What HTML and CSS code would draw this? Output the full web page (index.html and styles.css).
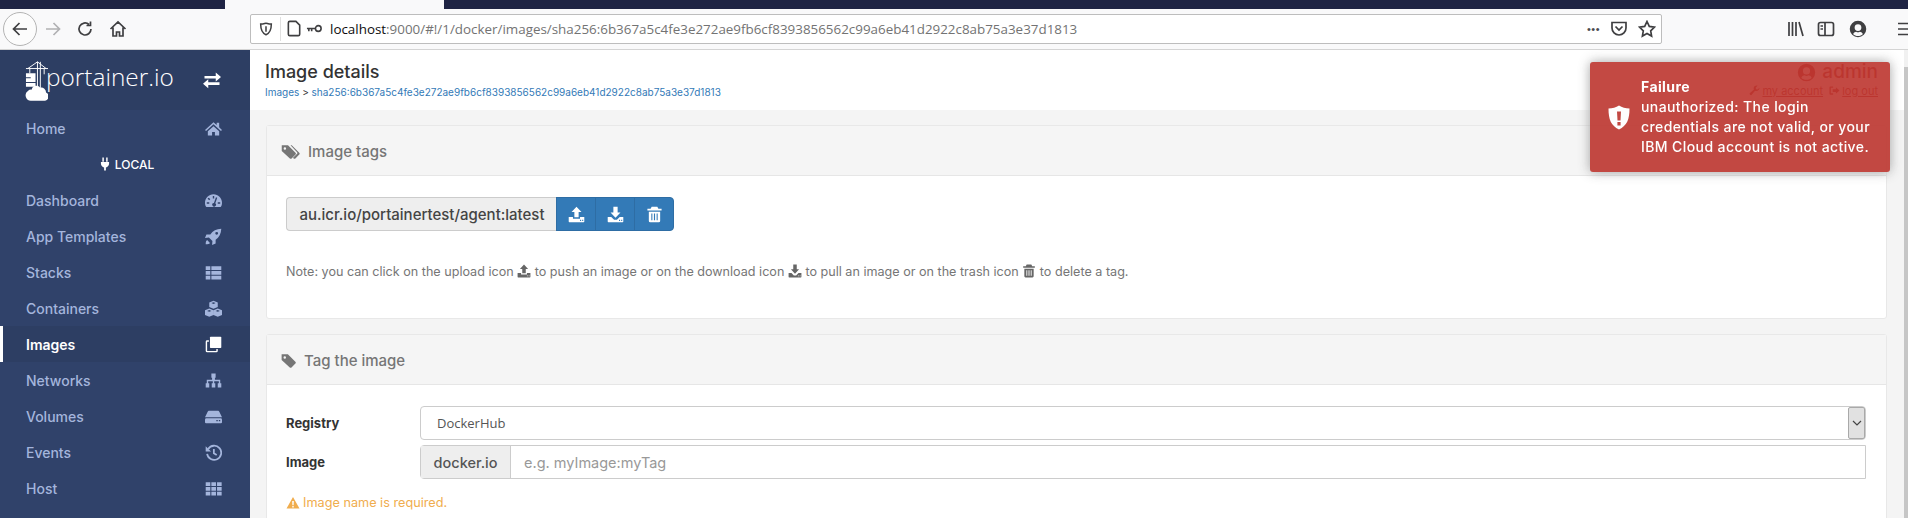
FILE: index.html
```html
<!DOCTYPE html>
<html lang="en">
<head>
<meta charset="utf-8">
<title>Portainer</title>
<link rel="stylesheet" href="styles.css">
</head>
<body>
<svg class="sprite" aria-hidden="true">
  <symbol id="i-home" viewBox="0 0 24 24"><path d="M12 3 0 14l1.5 1.6L12 6l10.500 9.600L24 14l-4-3.700V4h-3.500v3.100zM4 16l8-7.300L20 16v6h-6v-5h-4v5H4z"/></symbol>
  <symbol id="i-plug" viewBox="0 0 24 24"><path d="M7.500 1H10v7H7.500zM14 1h2.500v7H14zM5 8.500h14V11c0 3.500-2.500 6-5.500 6.800V23h-3v-5.200C7.500 17 5 14.500 5 11z"/></symbol>
  <symbol id="i-dash" viewBox="0 0 24 24"><path fill-rule="evenodd" d="M12 3C5.400 3 0 8.400 0 15c0 2.400.7 4.500 1.900 6.300h20.200C23.300 19.500 24 17.400 24 15 24 8.400 18.600 3 12 3zM11 5.500h2v3.500h-2zM5 8l2.500 2-1.400 1.500-2.500-2zM2.500 14.500h3.500v2H2.500zM18 14.500h3.500v2H18zM15.500 7.500l1.800.6-2.800 7.900a2.600 2.600 0 1 1-1.900-.6z"/></symbol>
  <symbol id="i-rocket" viewBox="0 0 24 24"><path fill-rule="evenodd" d="M23 1c-7 .3-12 3-15.500 8H2L0 14l5.500-.5 5 5L10 24l5-2v-5.500C20 13 22.700 8 23 1zM16.500 5.500a2 2 0 1 1 0 4 2 2 0 0 1 0-4zM3 17c-1.500 1-2 3-2 6 3 0 5-.5 6-2z"/></symbol>
  <symbol id="i-thlist" viewBox="0 0 24 24"><path d="M1 3h6.500v5.500H1zM9 3h14v5.500H9zM1 10h6.500v5H1zM9 10h14v5H9zM1 16.500h6.500V22H1zM9 16.500h14V22H9z"/></symbol>
  <symbol id="i-cubes" viewBox="0 0 24 24"><path fill-rule="evenodd" d="M12 1l6 2.500V10l-6 2.500L6 10V3.500zM12 3.200 9 4.400l3 1.200 3-1.200zM6 12l6 2.500V21l-6 2.500L0 21v-6.500zM6 14.200l-3 1.200 3 1.200 3-1.200zM18 12l6 2.500V21l-6 2.500-6-2.500-.1-6.500zM18 14.200l-3 1.200 3 1.200 3-1.200z"/></symbol>
  <symbol id="i-clone" viewBox="0 0 24 24"><path d="M8 1h14a1 1 0 0 1 1 1v14a1 1 0 0 1-1 1H8a1 1 0 0 1-1-1V2a1 1 0 0 1 1-1z"/><path d="M1 8a2 2 0 0 1 2-2h2.500v2H3v13h13v-2.500h2V21a2 2 0 0 1-2 2H3a2 2 0 0 1-2-2z"/></symbol>
  <symbol id="i-sitemap" viewBox="0 0 24 24"><path d="M9 2h6v6h-1v3h7.500v5H23v6h-5v-6h1.500v-3H13v3h1.500v6h-5v-6H11v-3H4.500v3H6v6H1v-6h1.500v-5H10V8H9z"/></symbol>
  <symbol id="i-hdd" viewBox="0 0 24 24"><path fill-rule="evenodd" d="M6 4h12c1 0 2 .6 2.400 1.500L24 13H0l3.600-7.500C4 4.600 5 4 6 4zM2 14.500h20a2 2 0 0 1 2 2V20a1.500 1.500 0 0 1-1.500 1.500h-21A1.500 1.500 0 0 1 0 20v-3.500a2 2 0 0 1 2-2zM16 17v1.800h2V17zM19.500 17v1.800h2V17z"/></symbol>
  <symbol id="i-history" viewBox="0 0 24 24"><path fill="none" stroke="currentColor" stroke-width="2.500" d="M4.500 7A10 10 0 1 1 3 14M12.500 7v6l4 2.500"/><path d="M1 3v7.500h7.500z"/></symbol>
  <symbol id="i-th" viewBox="0 0 24 24"><path d="M1 3h6.500v5.500H1zM9 3h6.500v5.500H9zM17 3h6.500v5.500H17zM1 10h6.500v5H1zM9 10h6.500v5H9zM17 10h6.500v5H17zM1 16.500h6.500V22H1zM9 16.500h6.500V22H9zM17 16.500h6.500V22H17z"/></symbol>
  <symbol id="i-tag" viewBox="0 0 24 24"><path fill-rule="evenodd" d="M1 2h10l12 12a2 2 0 0 1 0 2.800L16.800 23a2 2 0 0 1-2.800 0L1 11zM6 5a2 2 0 1 0 0 4 2 2 0 0 0 0-4z"/></symbol>
  <symbol id="i-tags" viewBox="0 0 30 24"><path fill-rule="evenodd" d="M1 2h10l12 12a2 2 0 0 1 0 2.800L16.800 23a2 2 0 0 1-2.800 0L1 11zM6 5a2 2 0 1 0 0 4 2 2 0 0 0 0-4z"/><path d="M15 2h2l12 12a2 2 0 0 1 0 2.800L22.800 23a2 2 0 0 1-2.800 0l-1-1 6.500-6.500a2 2 0 0 0 0-2.500z"/></symbol>
  <symbol id="i-upload" viewBox="0 0 24 24"><path fill-rule="evenodd" d="M12 1l7 7.500h-4V16H9V8.500H5zM1 15.500h6V18h10v-2.500h6V22a1 1 0 0 1-1 1H2a1 1 0 0 1-1-1zM17 19.500v1.500h1.500v-1.500zM20 19.500v1.500h1.500v-1.500z"/></symbol>
  <symbol id="i-download" viewBox="0 0 24 24"><path fill-rule="evenodd" d="M9 1h6v8h4l-7 7.500L5 9h4zM1 15.500h5l4 4h4l4-4h5V22a1 1 0 0 1-1 1H2a1 1 0 0 1-1-1zM17 19.500v1.500h1.500v-1.500zM20 19.500v1.500h1.500v-1.500z"/></symbol>
  <symbol id="i-trash" viewBox="0 0 24 24"><path fill-rule="evenodd" d="M8 1h8l1.500 3H22v2.500H2V4h4.500zM4 8h16v13a2 2 0 0 1-2 2H6a2 2 0 0 1-2-2zM7.500 10.500V20h1.500v-9.500zM11.200 10.500V20h1.600v-9.500zM15 10.500V20h1.500v-9.500z"/></symbol>
  <symbol id="i-warn" viewBox="0 0 24 24"><path fill-rule="evenodd" d="M12 2 24 23H0zM10.500 9l.4 8h2.200l.4-8zM10.700 18.500v2.500h2.600v-2.500z"/></symbol>
  <symbol id="i-shield" viewBox="0 0 24 24"><path fill-rule="evenodd" d="M12 0c3 2 6.500 3 10.500 3 0 11-2.500 17-10.500 21C4 20 1.500 14 1.500 3 5.500 3 9 2 12 0zM10 6l.5 9h3l.5-9zM10.400 16.500V20h3.200v-3.500z"/></symbol>
  <symbol id="i-user" viewBox="0 0 24 24"><path fill-rule="evenodd" d="M12 1a11 11 0 1 1 0 22 11 11 0 0 1 0-22zM12 5.500a4.500 4.500 0 1 0 0 9 4.500 4.500 0 0 0 0-9zM5.500 18.500c1.500 1.800 4 2.700 6.500 2.700s5-.9 6.500-2.700c-1-2-3-3-4-3-1 .6-1.700.9-2.500.9s-1.500-.3-2.500-.9c-1 0-3 1-4 3z"/></symbol>
  <symbol id="i-wrench" viewBox="0 0 24 24"><path d="M23 6c0 4-3 7-7 7-1 0-2-.2-2.800-.6L5.500 22a3 3 0 0 1-4-3.800L10.800 10c-.4-1-.6-2-.6-3 0-3.800 3-6 6.800-6 .8 0 1.500.1 2 .3L14.500 6l1 3 3 1L23 6z"/></symbol>
  <symbol id="i-signout" viewBox="0 0 24 24"><path d="M9 3v3H4v12h5v3H3a2 2 0 0 1-2-2V5a2 2 0 0 1 2-2zM15 5l8 7-8 7v-4H8V9h7z"/></symbol>
  <symbol id="i-exchange" viewBox="0 0 24 24"><path d="M17 2l7 6-7 6v-4H2V6.500h15zM7 11v4h15v3.500H7V23l-7-6z"/></symbol>
</svg>
<div class="app">
  <div class="tabs">
    <span class="tab-dark"></span>
    <span class="tab-active"></span>
    <span class="tab-dark grow"></span>
  </div>
  <header class="toolbar">
    <div class="nav-left">
      <span class="nav-back"><svg class="ff" viewBox="0 0 18 18"><path d="M16 9H3M8.500 3 2.500 9l6 6"/></svg></span>
      <svg class="ff nav-fwd" viewBox="0 0 18 18"><path d="M2 9h13M9.500 3l6 6-6 6"/></svg>
      <svg class="ff nav-reload" viewBox="0 0 18 18"><path d="M15 9a6 6 0 1 1-2-4.500M14.500 1.500v4h-4"/></svg>
      <svg class="ff nav-home" viewBox="0 0 18 18"><path d="M1.500 9 9 2l7.500 7M4 7.500V16h3.500v-4h3v4H14V7.500"/></svg>
    </div>
    <div class="urlbar">
      <svg class="ff u-shield" viewBox="0 0 18 18"><path d="M3 3.500c4 0 4.500-1 6-1s2 1 6 1c0 6-1 10-6 12-5-2-6-6-6-12zM9 6v6"/></svg>
      <span class="u-sep"></span>
      <svg class="ff u-page" viewBox="0 0 18 18"><path d="M4 1.500h6.500l4 4V15a1.500 1.500 0 0 1-1.500 1.500H4A1.500 1.500 0 0 1 2.500 15V3A1.500 1.500 0 0 1 4 1.500z"/></svg>
      <svg class="ff u-key" viewBox="0 0 18 18"><circle cx="13" cy="9" r="3"/><path d="M10 9H1M3 9v3M6 9v3"/></svg>
      <span class="u-text">localhost<span class="u-dim">:9000/#!/1/docker/images/sha256:6b367a5c4fe3e272ae9fb6cf8393856562c99a6eb41d2922c8ab75a3e37d1813</span></span>
      <span class="u-dots">•••</span>
      <svg class="ff u-pocket" viewBox="0 0 18 18"><path d="M2 2.500h14V8a7 7 0 0 1-14 0zM5.500 6.500 9 10l3.500-3.500"/></svg>
      <svg class="ff u-star" viewBox="0 0 18 18"><path d="M9 1.500l2.300 4.900 5.200.7-3.800 3.700.9 5.300L9 13.500l-4.600 2.600.9-5.300L1.500 7.100l5.200-.7z"/></svg>
    </div>
    <div class="nav-right">
      <svg class="ff" viewBox="0 0 18 18"><path d="M2 2v14M5.500 2v14M9 2v14M12 2l4 14"/></svg>
      <svg class="ff" viewBox="0 0 18 18"><rect x="1.500" y="2.500" width="15" height="13" rx="2"/><path d="M8 2.500v13M3.500 6h2.500M3.500 9h2.500"/></svg>
      <svg class="nr-user"><use href="#i-user"/></svg>
      <span class="nr-sep"></span>
      <svg class="ff nr-menu" viewBox="0 0 18 18"><path d="M2 3.500h14M2 9h14M2 14.500h14"/></svg>
    </div>
  </header>
  <div class="shell">
    <aside class="sidebar">
      <div class="brand">
        <div class="logo">
          <svg class="crane" viewBox="0 0 24 42">
            <path class="crane-line" d="M1 8h23M13 1 3 8M13 1l9 7M13 1v30M16 1v30M5 8v5M20 8v6"/>
            <path class="crane-fill" d="M1 13h10v4H1zM1 18h10v4H1zM1 23h10v4H1zM6 13h5v9H6z"/>
            <path class="crane-fill" d="M7 30a5 5 0 0 1 9-2 5 5 0 0 1 6 5 4.500 4.500 0 0 1-1 8.500H6a5.500 5.500 0 0 1-3-10 5 5 0 0 1 4-1.500z"/>
          </svg>
          <span class="logo-text">portainer.io</span>
        </div>
        <svg class="ico"><use href="#i-exchange"/></svg>
      </div>
      <nav class="menu">
        <a class="item"><span>Home</span><svg class="ico"><use href="#i-home"/></svg></a>
        <div class="endpoint"><svg class="plug"><use href="#i-plug"/></svg>LOCAL</div>
        <a class="item"><span>Dashboard</span><svg class="ico"><use href="#i-dash"/></svg></a>
        <a class="item"><span>App Templates</span><svg class="ico"><use href="#i-rocket"/></svg></a>
        <a class="item"><span>Stacks</span><svg class="ico"><use href="#i-thlist"/></svg></a>
        <a class="item"><span>Containers</span><svg class="ico"><use href="#i-cubes"/></svg></a>
        <a class="item active"><span>Images</span><svg class="ico"><use href="#i-clone"/></svg></a>
        <a class="item"><span>Networks</span><svg class="ico"><use href="#i-sitemap"/></svg></a>
        <a class="item"><span>Volumes</span><svg class="ico"><use href="#i-hdd"/></svg></a>
        <a class="item"><span>Events</span><svg class="ico"><use href="#i-history"/></svg></a>
        <a class="item"><span>Host</span><svg class="ico"><use href="#i-th"/></svg></a>
      </nav>
    </aside>
    <main class="main">
      <div class="page-head">
        <div>
          <h1 class="title">Image details</h1>
          <div class="crumbs"><a>Images</a> &gt; <a>sha256:6b367a5c4fe3e272ae9fb6cf8393856562c99a6eb41d2922c8ab75a3e37d1813</a></div>
        </div>
        <div class="account">
          <div class="acc-name"><svg class="acc-user"><use href="#i-user"/></svg>admin</div>
          <div class="acc-links"><svg class="acc-ico"><use href="#i-wrench"/></svg><u>my account</u> <svg class="acc-ico acc-gap"><use href="#i-signout"/></svg><u>log out</u></div>
        </div>
      </div>
      <div class="content">
        <section class="widget">
          <div class="w-head"><svg class="w-ico-wide"><use href="#i-tags"/></svg>Image tags</div>
          <div class="w-body tags-body">
            <div class="tag-group">
              <span class="tag-name">au.icr.io/portainertest/agent:latest</span>
              <span class="tag-btn"><svg class="btn-ico"><use href="#i-upload"/></svg></span>
              <span class="tag-btn"><svg class="btn-ico"><use href="#i-download"/></svg></span>
              <span class="tag-btn"><svg class="btn-ico"><use href="#i-trash"/></svg></span>
            </div>
            <p class="note">Note: you can click on the upload icon <svg class="note-ico"><use href="#i-upload"/></svg> to push an image or on the download icon <svg class="note-ico"><use href="#i-download"/></svg> to pull an image or on the trash icon <svg class="note-ico"><use href="#i-trash"/></svg> to delete a tag.</p>
          </div>
        </section>
        <section class="widget">
          <div class="w-head"><svg class="w-ico"><use href="#i-tag"/></svg>Tag the image</div>
          <div class="w-body form-body">
            <div class="f-row">
              <label class="f-label">Registry</label>
              <div class="select"><span>DockerHub</span><span class="sel-btn"><svg class="sel-chev" viewBox="0 0 10 6"><path d="M1 1l4 4 4-4"/></svg></span></div>
            </div>
            <div class="f-row">
              <label class="f-label">Image</label>
              <div class="input-group"><span class="addon">docker.io</span><span class="placeholder">e.g. myImage:myTag</span></div>
            </div>
            <div class="warning"><svg class="warn-ico"><use href="#i-warn"/></svg>Image name is required.</div>
          </div>
        </section>
      </div>
    </main>
    <div class="scrollbar"><span class="thumb"></span></div>
  </div>
</div>
<div class="toast">
  <svg class="toast-ico"><use href="#i-shield"/></svg>
  <div class="toast-text"><strong>Failure</strong><br>unauthorized: The login credentials are not valid, or your IBM Cloud account is not active.</div>
</div>
</body>
</html>
```
FILE: styles.css
```css
* { box-sizing: border-box; }
html, body { margin: 0; height: 100%; overflow: hidden; }
body { font-family: Inter, "Liberation Sans", sans-serif; font-size: 13px; color: #767676; background: #fff; }
.sprite { display: none; }
svg { fill: currentColor; flex: none; }
.app { height: 100vh; display: flex; flex-direction: column; }

.tabs { height: 9px; display: flex; flex: none; }
.tab-dark { width: 225px; background: #1f2444; }
.tab-dark.grow { flex: 1; width: auto; }
.tab-active { width: 219px; background: #f9f9fa; }

.toolbar { height: 41px; flex: none; display: flex; align-items: center; background: #f9f9fa; border-bottom: 1px solid #d4d4d4; padding-bottom: 1px; }
.ff { width: 18px; height: 18px; fill: none; stroke: #3f3f41; stroke-width: 1.7; }
.nav-left { width: 250px; display: flex; align-items: center; flex: none; padding-left: 3px; }
.nav-back { width: 34px; height: 34px; border: 1px solid #b4b4b4; border-radius: 50%; display: flex; align-items: center; justify-content: center; background: #fcfcfc; }
.nav-fwd { margin-left: 7px; stroke: #b1b1b3; }
.nav-reload { margin-left: 14px; }
.nav-home { margin-left: 15px; }
.urlbar { width: 1412px; height: 30px; flex: none; display: flex; align-items: center; background: #fff; border: 1px solid #bdbdbd; border-radius: 2px; }
.u-shield { margin-left: 7px; width: 16px; height: 16px; }
.u-sep { width: 1px; height: 24px; background: #e0e0e0; margin-left: 6px; }
.u-page { margin-left: 5px; width: 17px; height: 17px; }
.u-key { margin-left: 3px; width: 17px; height: 17px; }
.u-text { margin-left: 7px; font-family: "Open Sans", "Liberation Sans", sans-serif; font-size: 13.4px; color: #0c0c0d; white-space: nowrap; }
.u-dim { color: #737373; }
.u-dots { margin-left: auto; font-size: 11px; letter-spacing: 0.5px; color: #4a4a4f; font-family: "Liberation Sans", sans-serif; }
.u-pocket { margin-left: 10px; }
.u-star { margin: 0 5px 0 10px; }
.nav-right { flex: 1; display: flex; align-items: center; padding-left: 125px; gap: 12px; overflow: hidden; }
.nr-user { width: 18px; height: 18px; color: #3f3f41; margin-left: 2px; }
.nr-sep { width: 1px; height: 30px; background: #d8d8d8; }
.nr-menu { margin-left: 5px; }

.shell { flex: 1; display: flex; min-height: 0; }
.sidebar { width: 250px; flex: none; background: #30426a; color: #a4b5dc; }
.brand { height: 60px; background: #2d3e63; display: flex; align-items: center; justify-content: space-between; padding: 0 29px 0 25px; color: #fff; }
.logo { display: flex; align-items: center; }
.crane { width: 23px; height: 42px; margin-top: 2px; }
.crane-line { fill: none; stroke: #fff; stroke-width: 1; }
.crane-fill { fill: #fff; }
.logo-text { margin: -6px 0 0 -2px; font-family: "Open Sans", sans-serif; font-weight: 300; font-size: 24.4px; line-height: 1; color: #fff; }
.ico { width: 17px; height: 17px; }
.brand .ico { width: 18px; height: 18px; }
.item { height: 36px; display: flex; align-items: center; justify-content: space-between; padding: 0 28px 0 26px; font-size: 14px; font-weight: 500; }
.item.active { background: #2d3e63; color: #fff; box-shadow: inset 3px 0 0 #fff; font-weight: 600; }
.endpoint { height: 36px; display: flex; align-items: center; justify-content: center; gap: 3px; color: #fff; font-size: 12px; font-weight: 500; padding-left: 2px; }
.plug { width: 14px; height: 16px; }

.main { flex: 1; min-width: 0; display: flex; flex-direction: column; background: #f4f4f4; }
.page-head { height: 60px; flex: none; background: #fff; display: flex; justify-content: space-between; padding: 11px 26px 0 15px; }
.title { margin: 0; font-size: 18px; font-weight: 500; line-height: 22px; color: #333; }
.crumbs { font-size: 10px; line-height: 14px; margin-top: 2px; color: #333; }
.crumbs a { color: #337ab7; }
.account { text-align: right; color: #b03a33; }
.acc-name { font-size: 19px; font-weight: 500; line-height: 22px; display: flex; align-items: center; justify-content: flex-end; gap: 6px; }
.acc-user { width: 19px; height: 19px; }
.acc-links { font-size: 11px; line-height: 14px; margin-top: 1px; }
.acc-ico { width: 11px; height: 11px; vertical-align: -1px; margin-right: 2px; }
.acc-gap { margin-left: 3px; }

.content { flex: 1; padding: 15px 17px 0 16px; display: flex; flex-direction: column; gap: 15px; overflow: hidden; }
.widget { background: #fff; border: 1px solid #e8e8e8; border-radius: 3px; flex: none; }
.w-head { height: 50px; background: #f5f5f5; border-bottom: 1px solid #e6e6e6; display: flex; align-items: center; padding: 1px 0 0 14px; font-size: 15px; font-weight: 500; color: #767676; }
.w-ico-wide { width: 19px; height: 15px; margin-right: 8px; }
.w-ico { width: 15px; height: 15px; margin-right: 8px; }
.w-body { padding: 21px 19px 0; }
.tags-body { height: 142px; }
.tag-group { display: inline-flex; height: 34px; font-size: 15px; font-weight: 500; color: #444; }
.tag-name { width: 271px; display: flex; align-items: center; justify-content: center; background: #eee; border: 1px solid #ccc; border-right: 0; border-radius: 4px 0 0 4px; white-space: nowrap; }
.tag-btn { width: 40px; display: flex; align-items: center; justify-content: center; background: #337ab7; border: 1px solid #2e6da4; color: #fff; margin-left: -1px; }
.tag-btn:last-child { border-radius: 0 4px 4px 0; }
.btn-ico { width: 17px; height: 17px; }
.note { margin: 31px 0 0; font-size: 12.6px; line-height: 20px; white-space: nowrap; }
.note-ico { width: 14px; height: 14px; vertical-align: -2px; color: #666; }
.form-body { height: 200px; padding-right: 20px; }
.f-row { display: flex; align-items: center; height: 34px; margin-bottom: 5px; }
.f-label { width: 134px; font-size: 13px; font-weight: 700; color: #333; }
.select { flex: 1; height: 34px; display: flex; align-items: center; justify-content: space-between; border: 1px solid #ccc; border-radius: 4px; padding-left: 16px; font-family: "Open Sans", sans-serif; font-size: 13px; color: #555; background: #fff; }
.sel-btn { width: 17px; height: 32px; display: flex; align-items: center; justify-content: center; background: #e1e1e1; border: 1px solid #a9a9a9; border-radius: 2px; }
.sel-chev { width: 10px; height: 6px; fill: none; stroke: #444; stroke-width: 1.2; }
.input-group { flex: 1; height: 34px; display: flex; align-items: center; border: 1px solid #ccc; border-radius: 4px 0 0 4px; }
.addon { width: 90px; height: 100%; display: flex; align-items: center; justify-content: center; background: #eee; border-right: 1px solid #ccc; color: #555; font-size: 14.5px; font-weight: 500; }
.placeholder { margin-left: 13px; color: #999; font-size: 14.5px; }
.warning { margin-top: 16px; display: flex; align-items: center; font-size: 12.7px; color: #f0ad4e; }
.warn-ico { width: 14px; height: 13px; margin-right: 3px; }

.scrollbar { width: 4px; flex: none; background: #f1f1f1; padding-top: 17px; }
.thumb { display: block; width: 4px; height: 100%; background: #c6c6c6; }

.toast { position: fixed; left: 1590px; top: 62px; width: 300px; height: 110px; display: flex; align-items: center; background: #bd362f; opacity: 0.9; border-radius: 3px; box-shadow: 0 0 12px #999; color: #fff; font-size: 14px; letter-spacing: 0.4px; font-weight: 500; line-height: 20px; padding-left: 17px; }
.toast-ico { width: 24px; height: 27px; margin-right: 10px; }
.toast-text { width: 245px; }
.toast-text strong { font-weight: 700; }
```
